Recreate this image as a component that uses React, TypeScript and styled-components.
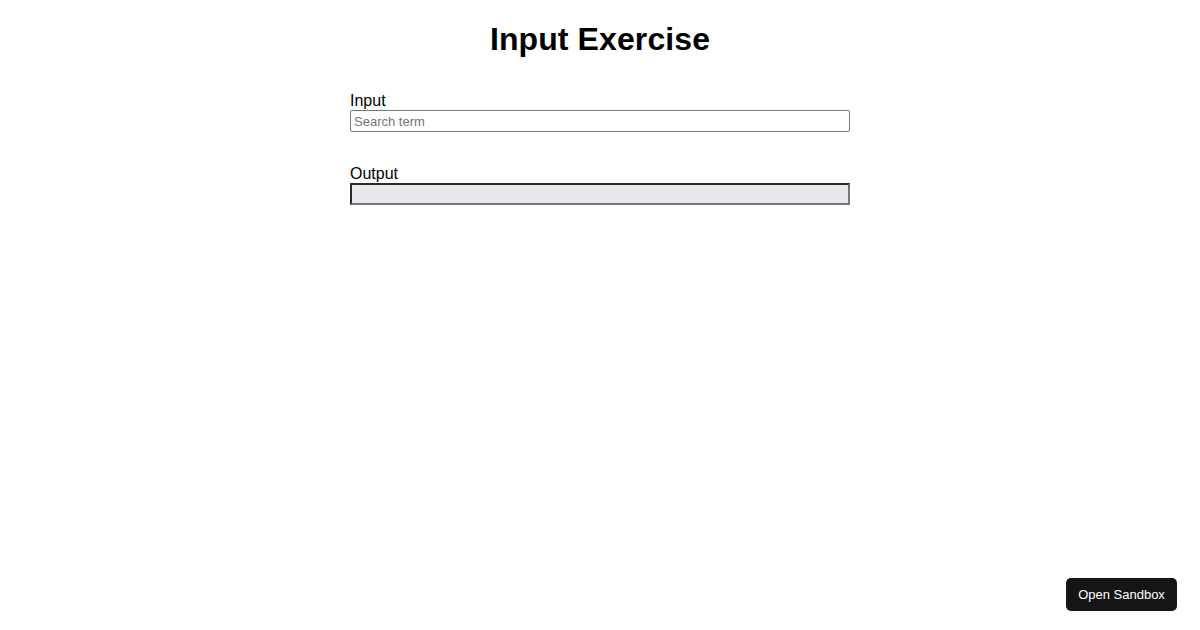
import styled, { createGlobalStyle } from "styled-components";

const GlobalStyle = createGlobalStyle`
  html, body {
    margin: 0;
    padding: 0;
    background: #ffffff;
  }
  body {
    font-family: "Liberation Sans", Arial, sans-serif;
    color: #000000;
  }
`;

const App = () => {
  return (
    <>
      <GlobalStyle />
      <Page>
        <Title>Input Exercise</Title>
        <Form>
          <Field>
            <Label htmlFor="search">Input</Label>
            <TextInput id="search" type="text" placeholder="Search term" />
          </Field>
          <Field>
            <Label htmlFor="result">Output</Label>
            <OutputBox id="result" />
          </Field>
        </Form>
      </Page>
      <SandboxButton type="button">Open Sandbox</SandboxButton>
    </>
  );
};

const Page = styled.div`
  display: flex;
  flex-direction: column;
  align-items: center;
  padding-top: 21px;
`;

const Title = styled.h1`
  margin: 0;
  font-size: 32px;
  line-height: 37px;
  font-weight: 700;
  letter-spacing: 0.1px;
`;

const Form = styled.div`
  width: 500px;
  display: flex;
  flex-direction: column;
  gap: 33px;
  margin-top: 34px;
`;

const Field = styled.div`
  display: flex;
  flex-direction: column;
`;

const Label = styled.label`
  font-size: 16px;
  line-height: 18px;
`;

const TextInput = styled.input`
  box-sizing: border-box;
  width: 100%;
  height: 22px;
  margin: 0;
  padding: 1px 3px;
  border: 1px solid #767676;
  border-radius: 2px;
  font-family: "Liberation Sans", Arial, sans-serif;
  font-size: 13px;
  color: #000000;
  background: #ffffff;
  outline: none;

  &::placeholder {
    color: #757575;
  }
`;

const OutputBox = styled.output`
  display: block;
  box-sizing: border-box;
  width: 100%;
  height: 22px;
  border-style: solid;
  border-width: 2px;
  border-color: #2b2b2b #767676 #767676 #2b2b2b;
  background: #e9e9ed;
`;

const SandboxButton = styled.button`
  position: fixed;
  right: 23px;
  bottom: 19px;
  width: 111px;
  height: 33px;
  padding: 0;
  border: none;
  border-radius: 5px;
  background: #151515;
  color: #ffffff;
  font-family: "Liberation Sans", Arial, sans-serif;
  font-size: 13px;
  cursor: pointer;
`;

export default App;
